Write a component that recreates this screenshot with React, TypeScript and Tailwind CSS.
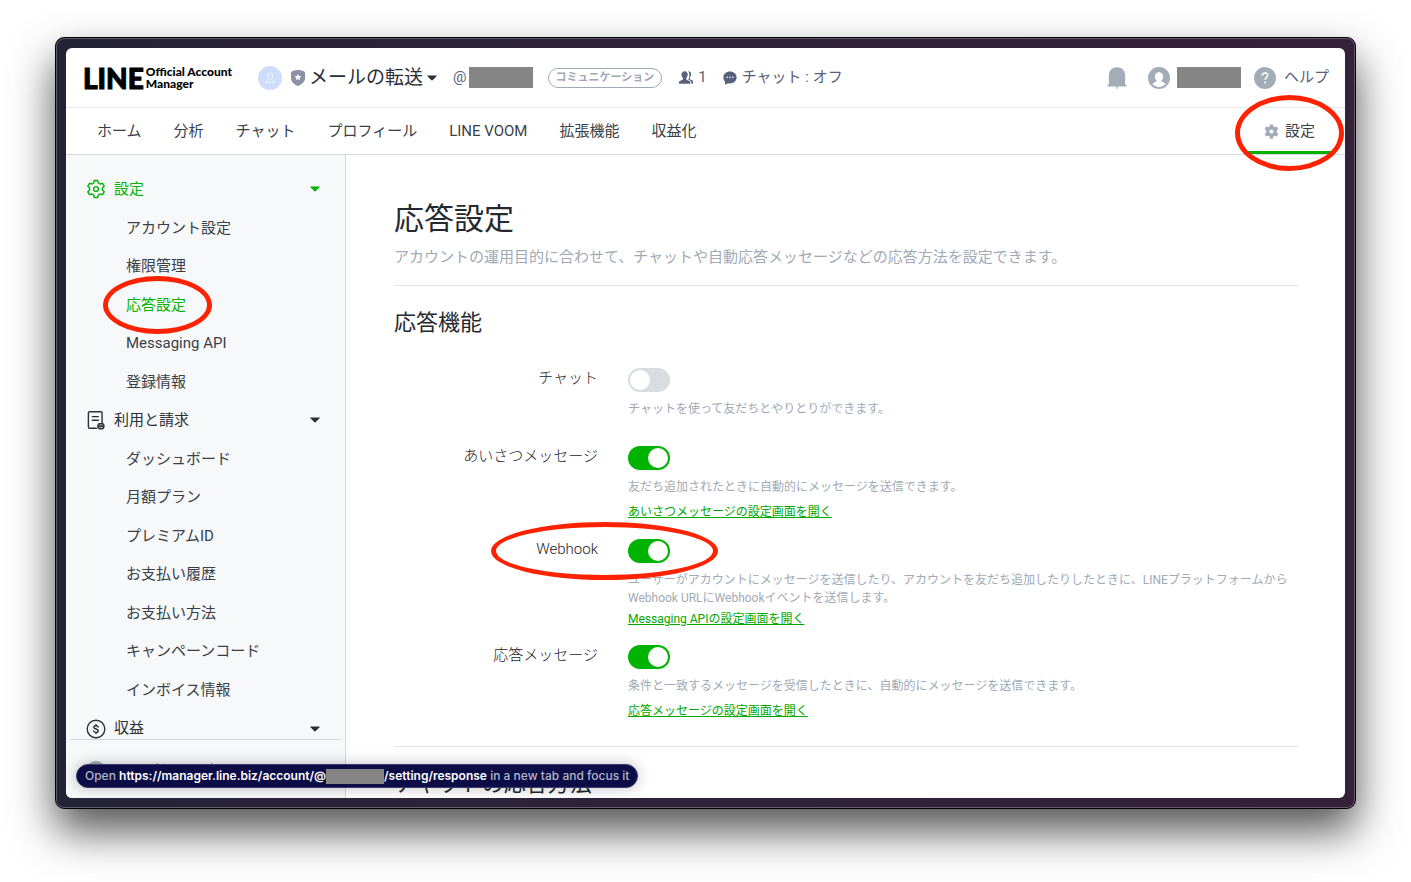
import type { ReactNode } from "react";

type IconProps = { className?: string };

const GEAR_PATH =
  "M8.3 1.5h3.4l.6 2.5 1.7 1 2.5-.7 1.7 2.9-1.8 1.8v2l1.8 1.8-1.7 2.9-2.5-.7-1.7 1-.6 2.5H8.3L7.7 16 6 15l-2.5.7-1.7-2.9L3.600 11V9L1.800 7.200l1.700-2.900L6 5l1.700-1z";

function GearOutline({ className }: IconProps) {
  return (
    <svg viewBox="0 0 20 20" className={className} fill="none" stroke="currentColor" strokeWidth="1.4" strokeLinejoin="round" aria-hidden="true">
      <path d={GEAR_PATH} />
      <circle cx="10" cy="10" r="2.400" />
    </svg>
  );
}

function GearSolid({ className }: IconProps) {
  return (
    <svg viewBox="0 0 20 20" className={className} fill="currentColor" aria-hidden="true">
      <path
        fillRule="evenodd"
        d="M8 .5h4l.6 2.800 1.700 1 2.800-.9 2 3.400L17 8.800v2.400l2.100 2-2 3.400-2.800-.9-1.700 1-.6 2.800H8l-.6-2.800-1.700-1-2.800.9-2-3.400L3 11.200V8.800L.9 6.800l2-3.400 2.800.9 1.700-1zM10 7.200a2.800 2.800 0 1 0 0 5.600 2.800 2.800 0 0 0 0-5.600z"
      />
    </svg>
  );
}

function BillingIcon({ className }: IconProps) {
  return (
    <svg viewBox="0 0 20 20" className={className} fill="none" stroke="currentColor" strokeWidth="1.400" strokeLinecap="round" aria-hidden="true">
      <path d="M10.500 18.200H3.600a1.200 1.200 0 0 1-1.200-1.200V3a1.200 1.200 0 0 1 1.200-1.200h11.300A1.200 1.200 0 0 1 16.100 3v9.500" />
      <path d="M6.300 6.600h6M6.300 10.300h6" />
      <rect x="12" y="13.700" width="5.800" height="5" rx="1.600" fill="currentColor" fillOpacity=".35" />
      <path d="M12 16.200h5.800" />
    </svg>
  );
}

function DollarIcon({ className }: IconProps) {
  return (
    <svg viewBox="0 0 20 20" className={className} fill="none" stroke="currentColor" strokeWidth="1.400" strokeLinecap="round" aria-hidden="true">
      <circle cx="10" cy="10" r="8.800" />
      <path d="M12.200 8c-.3-.9-1.100-1.300-2.200-1.300-1.300 0-2.200.6-2.200 1.600 0 2.300 4.500 1.100 4.500 3.500 0 1-.9 1.600-2.300 1.600-1.200 0-2.100-.5-2.400-1.500M10 5.500v1.200M10 13.400v1.200" />
    </svg>
  );
}

function Caret({ className }: IconProps) {
  return (
    <svg viewBox="0 0 10 6" className={className} fill="currentColor" aria-hidden="true">
      <path d="M.6.500h8.800c.4 0 .5.400.2.700L5.500 5.200a.7.7 0 0 1-1 0L.4 1.200C.1.900.2.500.6.500z" />
    </svg>
  );
}

function AvatarIcon({ className }: IconProps) {
  return (
    <svg viewBox="0 0 24 24" className={className} aria-hidden="true">
      <circle cx="12" cy="12" r="12" fill="#cdddfb" />
      <path
        d="M12 7.300a2.600 2.600 0 0 0-2.600 2.700c0 1.200.5 1.900 1.100 2.500v1.100c-1.500.5-3 .9-3 2.300v.6h9v-.6c0-1.400-1.500-1.800-3-2.300v-1.100c.6-.6 1.100-1.300 1.100-2.500A2.600 2.600 0 0 0 12 7.300z"
        fill="none"
        stroke="#f3f7ff"
      />
    </svg>
  );
}

function ShieldIcon({ className }: IconProps) {
  return (
    <svg viewBox="0 0 14 16" className={className} aria-hidden="true">
      <path d="M1.200 1.200C3 .4 5 0 7 0s4 .4 5.800 1.200c.7.300 1.200.8 1.200 1.600V8c0 4.200-3.500 6.700-7 8-3.500-1.300-7-3.800-7-8V2.800c0-.8.5-1.300 1.200-1.600z" fill="#8d91a8" />
      <path d="M7 3.800l1 2.200 2.400.3-1.800 1.600.5 2.400L7 9.100l-2.100 1.200.5-2.400-1.800-1.600L6 6z" fill="#fff" />
    </svg>
  );
}

function FriendsIcon({ className }: IconProps) {
  return (
    <svg viewBox="0 0 14 13" className={className} fill="currentColor" aria-hidden="true">
      <path d="M5.600.2c1.900 0 3.100 1.300 3.100 3.300 0 1.500-.6 2.700-1.400 3.400v1.200c0 .4.300.6.700.8l2 .8c.9.400 1.300 1 1.300 2.100v.9H0v-.9c0-1.100.4-1.700 1.300-2.100l2-.8c.4-.2.600-.4.600-.8V6.900C3.100 6.200 2.500 5 2.500 3.500 2.500 1.500 3.700.2 5.600.2z" />
      <path d="M9.300.3c1.700-.1 2.800 1.200 2.800 3.100 0 1.400-.6 2.500-1.300 3.200v1.100c0 .4.200.6.600.8l1.300.6c.9.400 1.300 1 1.300 2v1.700h-1.600v-.9c0-1.400-.6-2.200-1.700-2.700l-1.500-.7c.8-1 1.200-2.300 1.200-3.700 0-1.800-.4-3.300-1.100-4.500z" />
    </svg>
  );
}

function ChatIcon({ className }: IconProps) {
  return (
    <svg viewBox="0 0 14 14" className={className} aria-hidden="true">
      <path d="M7 .6c3.700 0 6.600 2.500 6.600 5.900S10.700 12.400 7 12.400c-.7 0-1.300-.1-1.900-.2L2 13.700v-3.100C.9 9.500.4 8.100.4 6.500.4 3.100 3.300.6 7 .6z" fill="#58607d" />
      <g fill="#fff">
        <circle cx="4.200" cy="6.300" r=".8" />
        <circle cx="7" cy="6.300" r=".8" />
        <circle cx="9.800" cy="6.300" r=".8" />
      </g>
    </svg>
  );
}

function BellIcon({ className }: IconProps) {
  return (
    <svg viewBox="0 0 20 22" className={className} fill="currentColor" aria-hidden="true">
      <path d="M10 .3c4.800 0 8.200 3.500 8.200 8.200v8.800l1.300 1.300v.9H.5v-.9l1.300-1.300V8.500C1.800 3.800 5.200.3 10 .3z" />
      <path d="M9.300 19h1.400v2.700H9.300z" />
    </svg>
  );
}

function UserIcon({ className }: IconProps) {
  return (
    <svg viewBox="0 0 22 22" className={className} aria-hidden="true">
      <circle cx="11" cy="11" r="11" fill="#a3adb8" />
      <path d="M11 5.200c2.500 0 4.200 1.800 4.200 4.300 0 1.700-.7 3-1.700 3.900v1.200c1.500.7 3.400 1.100 4 2.700A9.600 9.600 0 0 1 11 20.300a9.600 9.600 0 0 1-6.500-3c.6-1.600 2.500-2 4-2.700v-1.200c-1-.9-1.700-2.200-1.700-3.900 0-2.500 1.700-4.300 4.200-4.300z" fill="#fff" />
    </svg>
  );
}

function HelpIcon({ className }: IconProps) {
  return (
    <svg viewBox="0 0 22 22" className={className} aria-hidden="true">
      <circle cx="11" cy="11" r="11" fill="#a3adb8" />
      <path d="M8.300 8.700c0-1.700 1.100-2.700 2.700-2.700s2.700 1 2.700 2.400c0 2-2.600 2.100-2.600 4.300" fill="none" stroke="#fff" strokeWidth="1.500" />
      <circle cx="11" cy="15.600" r="1" fill="#fff" />
    </svg>
  );
}

function Highlight({ className }: { className: string }) {
  return <span aria-hidden="true" className={`pointer-events-none absolute z-20 rounded-[50%] border-5 border-[#ff2200] ${className}`} />;
}

type MenuGroup = {
  label: string;
  icon: ReactNode;
  active?: boolean;
  items: string[];
};

const MENU: MenuGroup[] = [
  {
    label: "設定",
    icon: <GearOutline className="size-5" />,
    active: true,
    items: ["アカウント設定", "権限管理", "応答設定", "Messaging API", "登録情報"],
  },
  {
    label: "利用と請求",
    icon: <BillingIcon className="size-5" />,
    items: ["ダッシュボード", "月額プラン", "プレミアムID", "お支払い履歴", "お支払い方法", "キャンペーンコード", "インボイス情報"],
  },
  { label: "収益", icon: <DollarIcon className="size-5" />, items: [] },
];

const TABS = ["ホーム", "分析", "チャット", "プロフィール", "LINE VOOM", "拡張機能", "収益化"];

type Setting = {
  id: string;
  label: string;
  on: boolean;
  description: string;
  link?: string;
  linkGap?: string;
  highlight?: boolean;
  bottomGap: string;
};

const SETTINGS: Setting[] = [
  { id: "chat", label: "チャット", on: false, description: "チャットを使って友だちとやりとりができます。", bottomGap: "pb-7" },
  {
    id: "greeting",
    label: "あいさつメッセージ",
    on: true,
    description: "友だち追加されたときに自動的にメッセージを送信できます。",
    link: "あいさつメッセージの設定画面を開く",
    linkGap: "mt-[7px]",
    bottomGap: "pb-[18px]",
  },
  {
    id: "webhook",
    label: "Webhook",
    on: true,
    description:
      "ユーザーがアカウントにメッセージを送信したり、アカウントを友だち追加したりしたときに、LINEプラットフォームからWebhook URLにWebhookイベントを送信します。",
    link: "Messaging APIの設定画面を開く",
    linkGap: "mt-[3px]",
    highlight: true,
    bottomGap: "pb-[17px]",
  },
  {
    id: "auto-reply",
    label: "応答メッセージ",
    on: true,
    description: "条件と一致するメッセージを受信したときに、自動的にメッセージを送信できます。",
    link: "応答メッセージの設定画面を開く",
    linkGap: "mt-[7px]",
    bottomGap: "pb-[26px]",
  },
];

function Header() {
  return (
    <header className="flex h-[60px] shrink-0 items-center border-b border-[#e6e8ea] pl-[17px] pr-4 text-[#58607d]">
      <a href="#" className="flex items-center gap-0.5 text-black">
        <span className="font-['Lato'] text-[28px] leading-[22px] font-black [-webkit-text-stroke:1px_black]">LINE</span>
        <span className="font-['Lato'] text-[12px] leading-3 font-black">
          Official Account
          <br />
          Manager
        </span>
      </a>
      <AvatarIcon className="ml-[26px] size-6" />
      <button type="button" className="ml-[9px] flex items-center text-[19px] leading-7 text-[#2a2f3a]">
        <ShieldIcon className="mr-1 h-4 w-3.5" />
        メールの転送
        <Caret className="ml-1 h-1.5 w-2.5" />
      </button>
      <span className="ml-4 flex items-center gap-0.5 text-[15px]">
        @<span className="h-[21px] w-16 bg-[#858585]" />
      </span>
      <span className="ml-[15px] flex h-5 items-center rounded-full border border-[#9fabb8] px-[7px] text-[11px] leading-[18px] font-bold text-[#9fa9b5]">
        コミュニケーション
      </span>
      <span className="ml-[17px] flex items-center gap-[5px] text-[15px]">
        <FriendsIcon className="h-[13px] w-3.5" />1
      </span>
      <span className="ml-4 flex items-center gap-[5px] text-[15px]">
        <ChatIcon className="size-3.5" />
        チャット : オフ
      </span>
      <div className="ml-auto flex items-center text-[15px]">
        <button type="button" aria-label="通知" className="text-[#a3adb8]">
          <BellIcon className="h-[22px] w-5" />
        </button>
        <UserIcon className="ml-[21px] size-[22px]" />
        <span className="ml-[7px] h-[21px] w-16 bg-[#858585]" />
        <a href="#" className="ml-[13px] flex items-center gap-2">
          <HelpIcon className="size-[22px]" />
          ヘルプ
        </a>
      </div>
    </header>
  );
}

function TabBar() {
  return (
    <nav className="flex h-[47px] shrink-0 items-stretch justify-between border-b border-[#d5d9dd] pr-3.5 pl-[31px] text-[15px] text-[#3a3f47]">
      <div className="flex items-center gap-8">
        {TABS.map((tab) => (
          <a key={tab} href="#">
            {tab}
          </a>
        ))}
      </div>
      <a href="#" className="relative flex items-center gap-1.5 border-b-3 border-[#00b300] px-4 pt-[3px]">
        <GearSolid className="size-[15px] text-[#9fabb8]" />
        設定
        <Highlight className="-top-[13px] -left-[13px] h-[76px] w-[109px]" />
      </a>
    </nav>
  );
}

function Sidebar() {
  return (
    <aside className="flex w-[280px] shrink-0 flex-col border-r border-[#d5d9dd] bg-[#f6f8fa] text-[15px] text-[#3a3f47]">
      <div className="mx-1 h-[585px] shrink-0 overflow-hidden border-b border-[#d3d8dc] pt-[15px]">
        <ul className="grid h-[578px] auto-rows-fr">
          {MENU.flatMap((group) => [
            <li key={group.label}>
              <button
                type="button"
                className={`flex h-full w-full items-center gap-2 pr-[21px] pl-4 ${group.active ? "text-[#00b300]" : "text-[#2b2f36]"}`}
              >
                {group.icon}
                {group.label}
                <Caret className="ml-auto h-1.5 w-2.5" />
              </button>
            </li>,
            ...group.items.map((item) => (
              <li key={item} className="flex items-center pl-14">
                <a href="#" className={`relative ${item === "応答設定" ? "text-[#00b300]" : ""}`}>
                  {item}
                  {item === "応答設定" && <Highlight className="-top-[18px] -left-[23px] h-[58px] w-[109px]" />}
                </a>
              </li>
            )),
          ])}
        </ul>
      </div>
      <a href="#" className="flex items-center gap-2 pt-5 pl-5 text-[#8b949e]">
        <HelpIcon className="size-5" />
        ヘルプお問い合わせ
      </a>
    </aside>
  );
}

function SettingRow({ setting }: { setting: Setting }) {
  return (
    <div className={`relative flex gap-[30px] ${setting.bottomGap}`}>
      <label htmlFor={setting.id} className="w-[204px] shrink-0 text-right text-[15px] leading-5 font-light text-[#1f2329]">
        {setting.label}
      </label>
      <div className="flex min-w-0 flex-1 flex-col items-start text-[12px] leading-[18px]">
        <input
          id={setting.id}
          type="checkbox"
          defaultChecked={setting.on}
          className="relative h-6 w-[42px] appearance-none rounded-full bg-[#d8dde1] before:absolute before:top-0.5 before:left-0.5 before:size-5 before:rounded-full before:bg-white checked:bg-[#00b300] checked:before:left-5"
        />
        <p className="mt-2 text-[#a0aab5]">{setting.description}</p>
        {setting.link && (
          <a href="#" className={`text-[#00a800] underline underline-offset-1 ${setting.linkGap}`}>
            {setting.link}
          </a>
        )}
      </div>
      {setting.highlight && <Highlight className="-top-[17px] left-[97px] h-[58px] w-[227px]" />}
    </div>
  );
}

export default function App() {
  return (
    <div className="h-screen overflow-hidden bg-white px-[55px] pt-[37px] pb-[73px] font-['Roboto','Noto_Sans_CJK_JP',sans-serif]">
      <div className="flex h-full rounded-[9px] border border-black bg-linear-to-r from-[#252338] to-[#35213a] p-2.5 shadow-[inset_0_0_0_1px_rgba(255,255,255,0.25),0_22px_44px_rgba(0,0,0,0.68)]">
        <div className="relative flex min-w-0 flex-1 flex-col overflow-hidden rounded-md bg-white">
          <Header />
          <TabBar />
          <div className="flex min-h-0 flex-1">
            <Sidebar />
            <main className="min-w-0 flex-1 overflow-hidden pt-[42px] pr-[47px] pl-12 text-[#24292f]">
              <h1 className="text-[30px] leading-[44px]">応答設定</h1>
              <p className="mt-1 text-[15px] leading-6 text-[#a0aab5]">アカウントの運用目的に合わせて、チャットや自動応答メッセージなどの応答方法を設定できます。</p>
              <section className="mt-4 border-t border-[#e2e4e6] pt-5">
                <h2 className="mb-7 text-[22px] leading-[34px]">応答機能</h2>
                {SETTINGS.map((setting) => (
                  <SettingRow key={setting.id} setting={setting} />
                ))}
              </section>
              <section className="border-t border-[#e2e4e6] pt-5">
                <h2 className="text-[22px] leading-[34px]">チャットの応答方法</h2>
              </section>
            </main>
          </div>
          <div
            role="status"
            className="absolute bottom-2.5 left-2.5 z-30 flex h-6 items-center rounded-full border border-[#3b3c6b] bg-[#0c0d47] px-2 font-['Inter',sans-serif] text-[12px] font-medium whitespace-pre text-[#b4b5c8] shadow-[0_0_14px_rgba(0,0,0,0.25)]"
          >
            Open <span className="font-semibold text-white">https://manager.line.biz/account/@</span>
            <span className="h-[15px] w-[58px] bg-[#858585]" />
            <span className="font-semibold text-white">/setting/response</span> in a new tab and focus it
          </div>
        </div>
      </div>
    </div>
  );
}
